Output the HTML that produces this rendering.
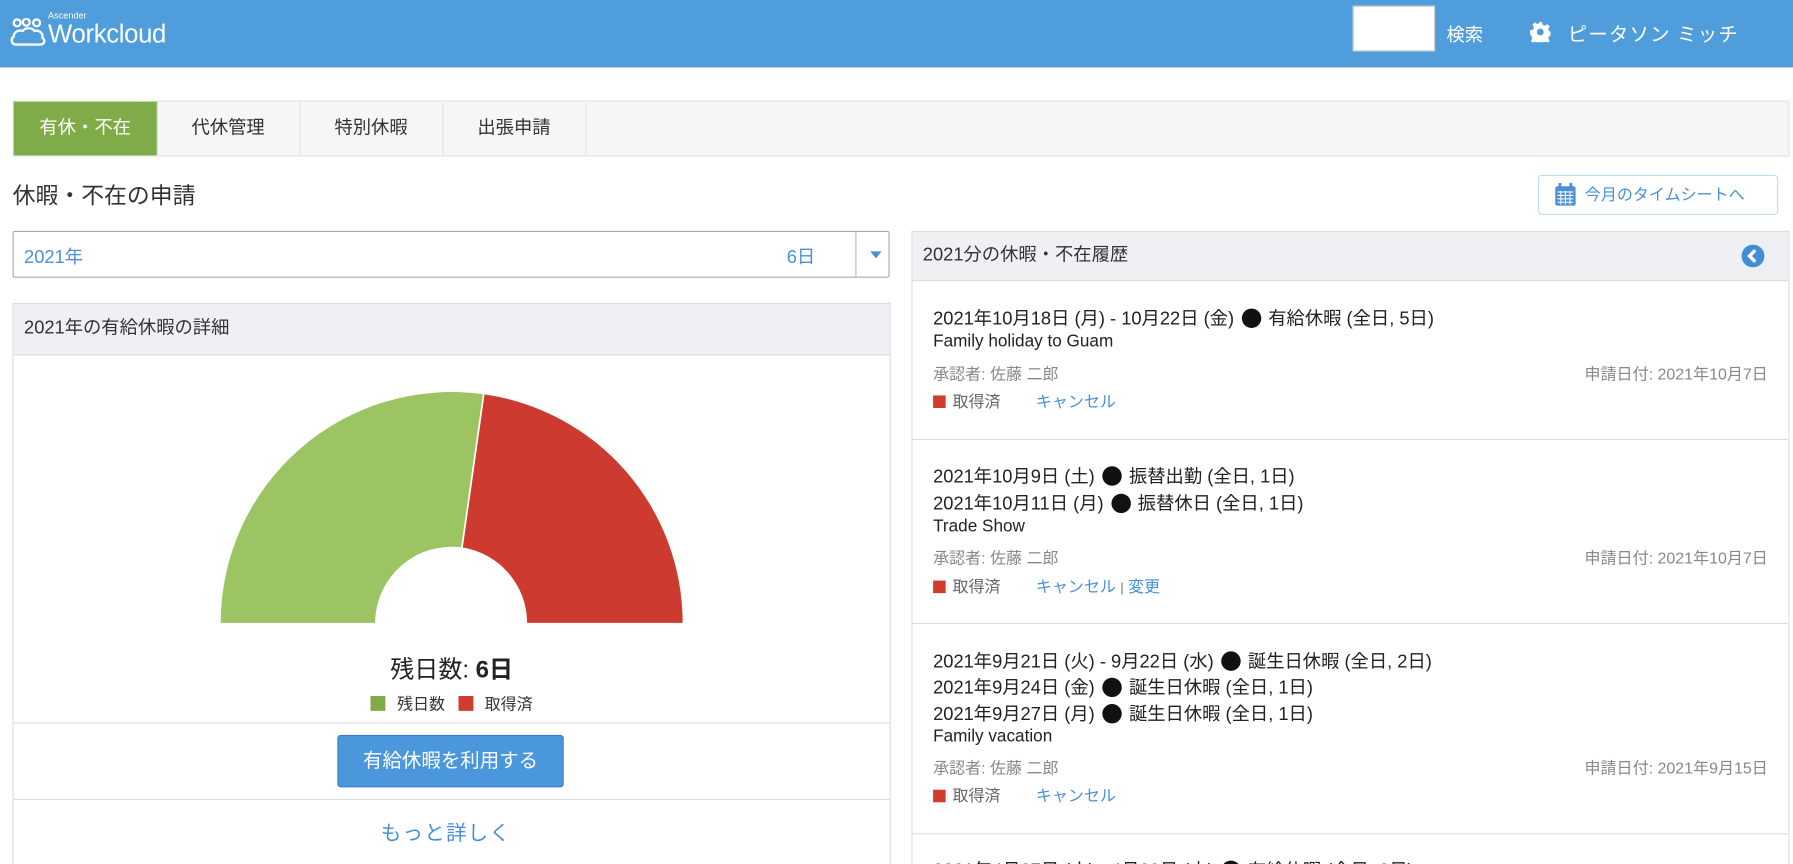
<!DOCTYPE html>
<html><head><meta charset="utf-8">
<style>
html,body{margin:0;padding:0;width:1793px;height:864px;overflow:hidden;background:#fff}
#w{position:absolute;left:0;top:0;width:1568px;height:756px;overflow:hidden;transform:scale(1.14349,1.14286);transform-origin:0 0;font-family:"Liberation Sans","Noto Sans CJK JP",sans-serif;color:#333}
.a{position:absolute}
.hdr{left:0;top:0;width:1568px;height:59px;background:#4f9ddb}
.tabs{left:11px;top:88px;width:1552px;height:47px;background:#f6f6f6;border:1px solid #e3e3e3}
.tab{position:absolute;top:0;height:47px;line-height:47px;width:125px;text-align:center;font-size:16px;color:#333;border-right:1px solid #e3e3e3}
.panel{border:1px solid #ddd;border-bottom:none;background:#fff;box-sizing:border-box}
.ph{background:#eef0f4;border-bottom:1px solid #ddd;font-size:16px;line-height:44px;padding-left:9px;color:#333}
.it{position:absolute;left:0;width:766px;border-bottom:1px solid #ddd}
.l{position:absolute;left:18px;font-size:16px;color:#222;white-space:nowrap}
.m{position:absolute;font-size:14px;color:#888;white-space:nowrap}
.dot{display:inline-block;width:17px;height:17px;border-radius:50%;background:#111;vertical-align:-3px;margin:0 2px}
.sq{display:inline-block;width:11px;height:11px;background:#d13b30;margin-right:6px;vertical-align:-1px}
.bl{color:#4a90d9}
</style></head><body><div id="w">
<div class="a hdr"></div>
<svg class="a" style="left:9px;top:16px" width="32" height="26" viewBox="0 0 32 26" fill="none" stroke="#fff" stroke-width="2"><circle cx="6" cy="4" r="3"/><circle cx="14" cy="3.5" r="3"/><circle cx="23" cy="4" r="3"/><path d="M5 23c-4 0-5-5-2-7 0-4 4-6 8-5 2-3 8-3 10 0 4-1 8 2 7 6 3 2 2 6-2 6z"/></svg>
<div class="a" style="left:42px;top:9px;font-size:8px;color:#fff">Ascender</div>
<div class="a" style="left:42px;top:17px;font-size:22.5px;color:#fff;letter-spacing:-0.3px">Workcloud</div>
<div class="a" style="left:1183px;top:5px;width:72px;height:40px;background:#fff;border:1px solid #ccc;box-sizing:border-box"></div>
<div class="a" style="left:1265px;top:17px;font-size:16px;color:#fff">検索</div>
<svg class="a" style="left:1338px;top:19px" width="18" height="18" viewBox="0 0 18 18"><path fill="#fff" d="M7.5 0h3l.5 2.5 2 1 2.2-1.4 2.1 2.1-1.4 2.2.9 2.1 2.6.5v3l-2.6.5-.9 2.1 1.4 2.2-2.1 2.1-2.2-1.4-2 .9-.5 2.6h-3l-.5-2.6-2-.9-2.2 1.4-2.1-2.1 1.4-2.2-.9-2.1L0 10.5v-3l2.6-.5.9-2.1-1.4-2.2 2.1-2.1 2.2 1.4 2-1z"/><circle cx="9" cy="9" r="3" fill="#4f9ddb"/></svg>
<div class="a" style="left:1371px;top:16px;font-size:17px;color:#fff;letter-spacing:1px">ピータソン ミッチ</div>

<div class="a tabs">
<div class="tab" style="left:0;background:#7fac48;color:#fff">有休・不在</div>
<div class="tab" style="left:125px">代休管理</div>
<div class="tab" style="left:250px">特別休暇</div>
<div class="tab" style="left:375px">出張申請</div>
</div>
<div class="a" style="left:11px;top:155px;font-size:20px;color:#333">休暇・不在の申請</div>
<div class="a" style="left:1345px;top:153px;width:210px;height:35px;border:1px solid #bfdcf2;border-radius:3px;box-sizing:border-box;font-size:14px;color:#4a90d9;line-height:33px;padding-left:40px">今月のタイムシートへ</div>
<svg class="a" style="left:1360px;top:160px" width="18" height="20" viewBox="0 0 18 20"><rect x="0" y="3" width="18" height="17" rx="2" fill="#4a90d9"/><rect x="3" y="0" width="2.5" height="5" fill="#4a90d9"/><rect x="12.5" y="0" width="2.5" height="5" fill="#4a90d9"/><path d="M2 8h14M2 11h14M2 14h14M2 17h14M5 7v12M9 7v12M13 7v12" stroke="#fff" stroke-width=".9"/></svg>

<div class="a" style="left:11px;top:202px;width:767px;height:41px;border:1px solid #aaa;border-radius:2px;box-sizing:border-box">
<span class="a" style="left:9px;top:8px;font-size:16px;color:#4a90d9">2021年</span>
<span class="a" style="left:676px;top:8px;font-size:16px;color:#4a90d9">6日</span>
<div class="a" style="left:736px;top:0;width:1px;height:39px;background:#bbb"></div>
<div class="a" style="left:749px;top:17px;width:0;height:0;border-left:5px solid transparent;border-right:5px solid transparent;border-top:6px solid #4a90d9"></div>
</div>

<div class="a panel" style="left:11px;top:265px;width:768px;height:491px">
<div class="ph">2021年の有給休暇の詳細</div>
</div>
<svg class="a" style="left:180px;top:330px" width="430" height="220" viewBox="180 330 430 220">
<path d="M193 545A202 202 0 0 1 423 345L404 479A67 67 0 0 0 328 545Z" fill="#9dc462"/>
<path d="M423 345A202 202 0 0 1 597 545L461 545A67 67 0 0 0 404 479Z" fill="#cd3a30"/>
<path d="M423 345L404 479" stroke="#fff" stroke-width="1.5"/>
</svg>
<div class="a" style="left:0;width:790px;text-align:center;top:570px;font-size:21px;color:#222">残日数: <b>6日</b></div>
<div class="a" style="left:0;width:790px;text-align:center;top:606px;font-size:14px;color:#333"><span class="sq" style="background:#7fac48;width:13px;height:13px;margin-right:10px"></span>残日数 &nbsp;&nbsp;<span class="sq" style="width:13px;height:13px;margin-right:10px"></span>取得済</div>
<div class="a" style="left:12px;top:632px;width:766px;height:1px;background:#ddd"></div>
<div class="a" style="left:295px;top:643px;width:198px;height:46px;background:#4a97dc;border:1px solid #3a80c8;border-radius:3px;box-sizing:border-box;color:#fff;font-size:17px;text-align:center;line-height:44px">有給休暇を利用する</div>
<div class="a" style="left:12px;top:699px;width:766px;height:1px;background:#ddd"></div>
<div class="a" style="left:0;width:780px;text-align:center;top:715px;font-size:18px;color:#4a90d9;letter-spacing:1px">もっと詳しく</div>

<div class="a panel" style="left:797px;top:202px;width:768px;height:554px;overflow:hidden">
<div class="ph" style="line-height:42px">2021分の休暇・不在履歴</div>
<svg class="a" style="left:725px;top:11px" width="20" height="20" viewBox="0 0 20 20"><circle cx="10" cy="10" r="10" fill="#3f8fd8"/><path d="M12 5L7 10l5 5" stroke="#fff" stroke-width="3" fill="none"/></svg>
<div class="it" style="top:43px;height:138px">
<div class="l" style="top:19px">2021年10月18日 (月) - 10月22日 (金) <span class="dot"></span> 有給休暇 (全日, 5日)</div>
<div class="l" style="top:44px;font-size:15px">Family holiday to Guam</div>
<div class="m" style="left:18px;top:71px">承認者: 佐藤 二郎</div>
<div class="m" style="right:18px;top:71px">申請日付: 2021年10月7日</div>
<div class="m" style="left:18px;top:95px;color:#666"><span class="sq"></span>取得済 <span class="bl" style="margin-left:27px">キャンセル</span></div>
</div>
<div class="it" style="top:182px;height:160px">
<div class="l" style="top:18px">2021年10月9日 (土) <span class="dot"></span> 振替出勤 (全日, 1日)</div>
<div class="l" style="top:42px">2021年10月11日 (月) <span class="dot"></span> 振替休日 (全日, 1日)</div>
<div class="l" style="top:67px;font-size:15px">Trade Show</div>
<div class="m" style="left:18px;top:93px">承認者: 佐藤 二郎</div>
<div class="m" style="right:18px;top:93px">申請日付: 2021年10月7日</div>
<div class="m" style="left:18px;top:118px;color:#666"><span class="sq"></span>取得済 <span class="bl" style="margin-left:27px">キャンセル</span> <span style="font-size:11px">|</span> <span class="bl">変更</span></div>
</div>
<div class="it" style="top:343px;height:183px">
<div class="l" style="top:19px">2021年9月21日 (火) - 9月22日 (水) <span class="dot"></span> 誕生日休暇 (全日, 2日)</div>
<div class="l" style="top:42px">2021年9月24日 (金) <span class="dot"></span> 誕生日休暇 (全日, 1日)</div>
<div class="l" style="top:65px">2021年9月27日 (月) <span class="dot"></span> 誕生日休暇 (全日, 1日)</div>
<div class="l" style="top:90px;font-size:15px">Family vacation</div>
<div class="m" style="left:18px;top:116px">承認者: 佐藤 二郎</div>
<div class="m" style="right:18px;top:116px">申請日付: 2021年9月15日</div>
<div class="m" style="left:18px;top:140px;color:#666"><span class="sq"></span>取得済 <span class="bl" style="margin-left:27px">キャンセル</span></div>
</div>
<div class="it" style="top:527px;height:26px;border:none;overflow:hidden">
<div class="l" style="top:18px">2021年4月27日 (火) - 4月28日 (水) <span class="dot"></span> 有給休暇 (全日, 2日)</div>
</div>
</div>
</div></body></html>
